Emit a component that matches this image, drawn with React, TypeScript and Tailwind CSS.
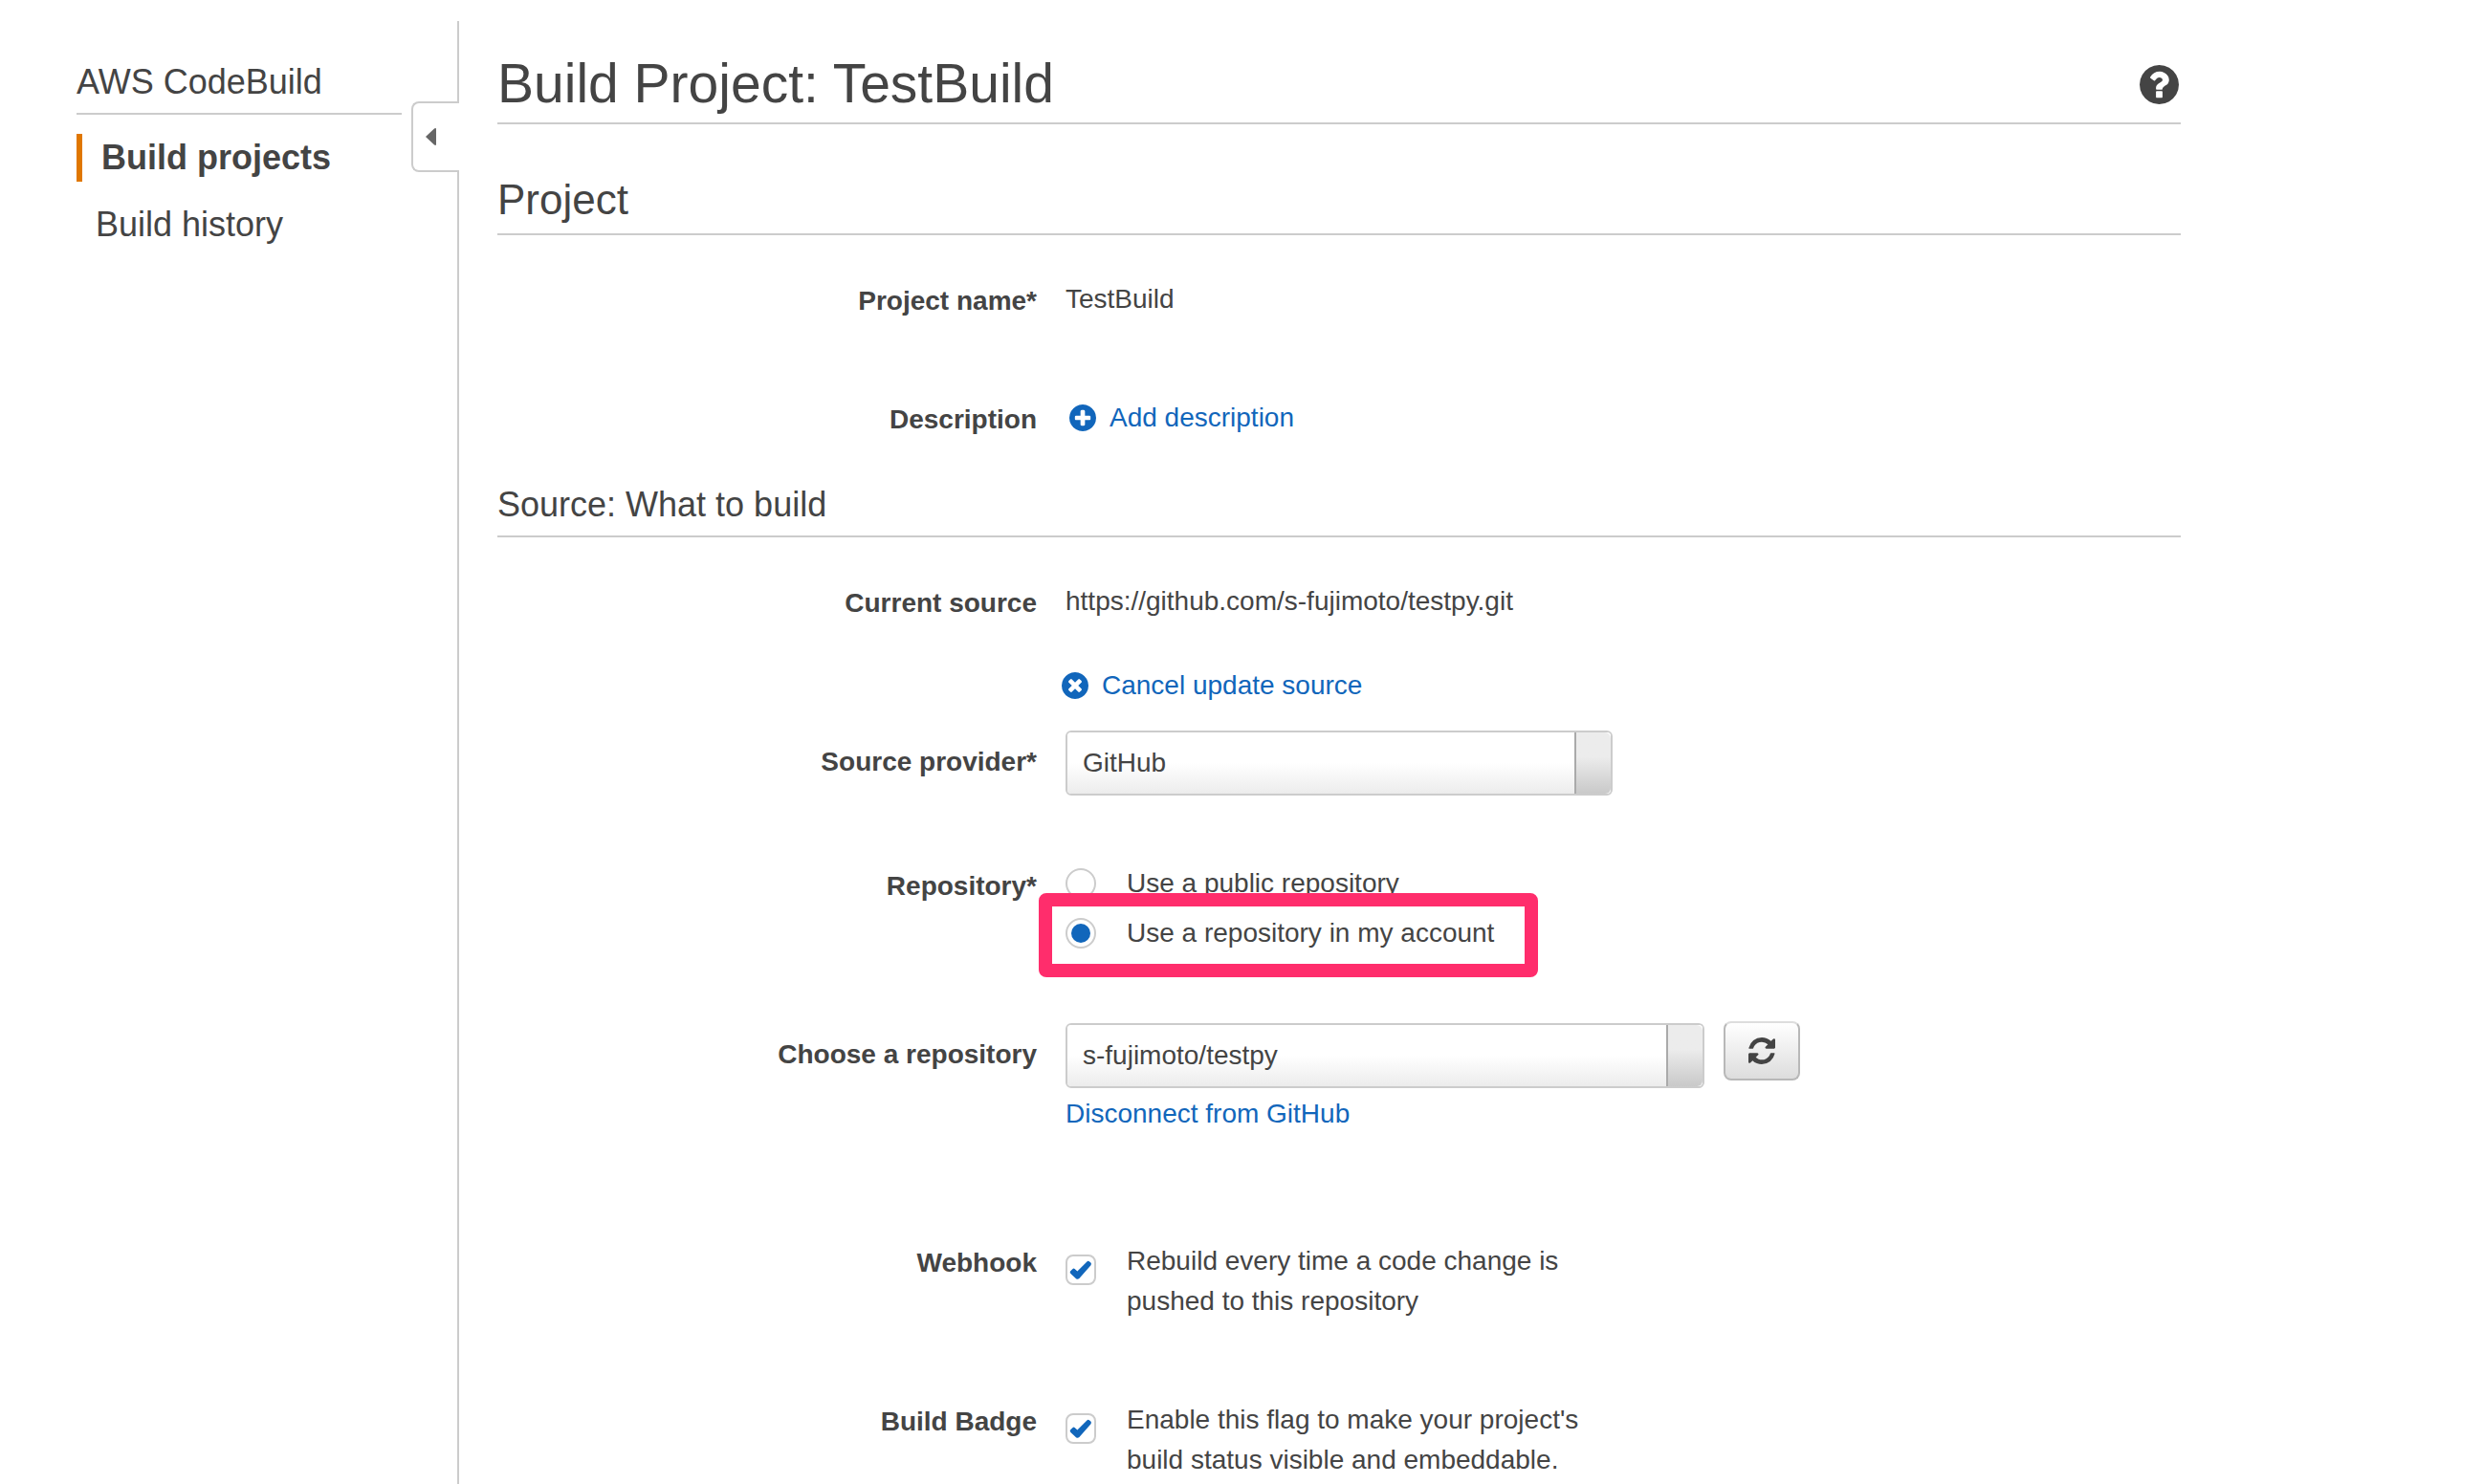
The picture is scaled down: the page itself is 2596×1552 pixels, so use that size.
import { useState } from "react"
import { clsx } from "clsx"

const circle =
  "M1664 896q0 209-103 385.5t-279.5 279.5-385.5 103-385.5-103-279.5-279.5-103-385.5 103-385.5 279.5-279.5 385.5-103 385.5 103 279.5 279.5 103 385.5z"

const glyphs = {
  help: `M1024 1376v-192q0-14-9-23t-23-9h-192q-14 0-23 9t-9 23v192q0 14 9 23t23 9h192q14 0 23-9t9-23zm256-672q0-88-55.5-163t-138.5-116-170-41q-243 0-371 213-15 24 8 42l132 100q7 6 19 6 16 0 25-12 53-68 86-92 34-24 86-24 48 0 85.5 26t37.5 59q0 38-20 61t-68 45q-63 28-115.5 86.5t-52.5 125.5v36q0 14 9 23t23 9h192q14 0 23-9t9-23q0-19 21.5-49.5t54.5-49.5q32-18 49-28.5t46-35 44.5-48 28-60.5 12.5-81z${circle}`,
  plus: `M1344 960v-128q0-26-19-45t-45-19h-256v-256q0-26-19-45t-45-19h-128q-26 0-45 19t-19 45v256h-256q-26 0-45 19t-19 45v128q0 26 19 45t45 19h256v256q0 26 19 45t45 19h128q26 0 45-19t19-45v-256h256q26 0 45-19t19-45z${circle}`,
  times: `M1277 1122q0-26-19-45l-181-181 181-181q19-19 19-45 0-27-19-46l-90-90q-19-19-46-19-26 0-45 19l-181 181-181-181q-19-19-45-19-27 0-46 19l-90 90q-19 19-19 46 0 26 19 45l181 181-181 181q-19 19-19 45 0 27 19 46l90 90q19 19 46 19 26 0 45-19l181-181 181 181q19 19 45 19 27 0 46-19l90-90q19-19 19-46z${circle}`,
  refresh:
    "M1639 1056q0 5-1 7-64 268-268 434.5t-478 166.5q-146 0-282.5-55t-243.5-157l-129 129q-19 19-45 19t-45-19-19-45v-448q0-26 19-45t45-19h448q26 0 45 19t19 45-19 45l-137 137q71 66 161 102t187 36q134 0 250-65t186-179q11-17 53-117 8-23 30-23h192q13 0 22.5 9.5t9.5 22.5zm25-800v448q0 26-19 45t-45 19h-448q-26 0-45-19t-19-45 19-45l138-138q-148-137-349-137-134 0-250 65t-186 179q-11 17-53 117-8 23-30 23h-199q-13 0-22.5-9.5t-9.5-22.5v-7q65-268 270-434.5t480-166.5q146 0 284 55.5t245 156.5l130-129q19-19 45-19t45 19 19 45z",
}

function Glyph({ name, className }: { name: keyof typeof glyphs; className: string }) {
  return (
    <svg viewBox="128 128 1536 1536" fill="currentColor" fillRule="evenodd" className={className} aria-hidden="true">
      <path d={glyphs[name]} />
    </svg>
  )
}

type RowProps = {
  label?: string
  htmlFor?: string
  className?: string
  labelClass?: string
  children: React.ReactNode
}

function Row({ label, htmlFor, className, labelClass = "pt-0.5", children }: RowProps) {
  const text = clsx("text-right font-bold", labelClass)
  return (
    <div className={clsx("grid grid-cols-[564px_1fr] gap-x-[30px]", className)}>
      {htmlFor ? <label htmlFor={htmlFor} className={text}>{label}</label> : <div className={text}>{label}</div>}
      <div>{children}</div>
    </div>
  )
}

type DropdownProps = { id: string; className: string; options: string[] }

function Dropdown({ id, className, options }: DropdownProps) {
  return (
    <div className={clsx("relative h-[68px] overflow-hidden rounded-md border-2 border-[#ccc]", className)}>
      <select
        id={id}
        className="h-full w-full appearance-none bg-linear-to-b from-white from-50% to-[#ececec] pr-12 pl-4"
      >
        {options.map((o) => <option key={o}>{o}</option>)}
      </select>
      <span className="pointer-events-none absolute inset-y-0 right-0 w-[38px] rounded-r-md border-l-2 border-[#aaa] bg-linear-to-b from-[#ececec] from-40% to-[#c9c9c9]" />
    </div>
  )
}

type RadioProps = { label: string; checked: boolean; onChange: () => void }

function RepoRadio({ label, checked, onChange }: RadioProps) {
  return (
    <label className="flex h-[52px] w-fit items-center gap-8">
      <input
        type="radio"
        name="repository"
        checked={checked}
        onChange={onChange}
        className="size-8 appearance-none rounded-full border-2 border-[#ccc] bg-white p-1 before:block before:size-5 before:rounded-full checked:before:bg-[#1166bb]"
      />
      {label}
    </label>
  )
}

function Checkbox({ id, children }: { id: string; children: React.ReactNode }) {
  return (
    <div className="flex gap-8">
      <span className="relative mt-3.5 size-8 shrink-0">
        <input
          id={id}
          type="checkbox"
          defaultChecked
          className="peer block size-8 appearance-none rounded-lg border-2 border-[#ccc] bg-white"
        />
        <svg
          viewBox="0 0 32 32"
          className="pointer-events-none absolute inset-0 hidden size-8 fill-[#1166bb] peer-checked:block"
          aria-hidden="true"
        >
          <path d="M5 17.4 7.6 14.9Q8.6 14.1 9.6 15L12.4 17.6 22.4 7.4Q23.6 6.4 24.8 7.2L26.4 8.6Q27.5 9.8 26.5 11.2L14.4 25Q12.8 26.5 11 25.2L5.4 20Q4.2 18.6 5 17.4Z" />
        </svg>
      </span>
      <label htmlFor={id} className="w-[500px]">{children}</label>
    </div>
  )
}

function SideNav() {
  return (
    <aside className="flex w-[480px] shrink-0 pl-20">
      <nav className="flex-1 pt-16 text-[36px]">
        <h2 className="border-b-2 border-[#ccc] pb-2.5 leading-[44px]">AWS CodeBuild</h2>
        <a href="#projects" className="mt-5 block border-l-6 border-[#e07700] pl-5 leading-[50px] font-bold">
          Build projects
        </a>
        <a href="#history" className="mt-5 block pl-5 leading-[50px]">Build history</a>
      </nav>
      <div className="ml-2.5 flex w-[50px] flex-col pt-[22px]">
        <div className="h-[84px] border-r-2 border-[#ccc]" />
        <button
          aria-label="Collapse navigation"
          className="flex h-[74px] items-center rounded-l-lg border-2 border-r-0 border-[#ccc] pl-[13px]"
        >
          <svg viewBox="0 0 11 18" className="h-[18px] w-[11px] fill-[#666]" aria-hidden="true">
            <path d="M0 9 9 .5Q11 -.5 11 1V17Q11 18.5 9 17.5Z" />
          </svg>
        </button>
        <div className="flex-1 border-r-2 border-[#ccc]" />
      </div>
    </aside>
  )
}

export default function App() {
  const [ownRepo, setOwnRepo] = useState(true)

  return (
    <div className="flex min-h-screen bg-white font-['Liberation_Sans',Arial,sans-serif] text-[28px] leading-[42px] text-[#444]">
      <SideNav />
      <main className="min-w-0 flex-1 pt-[55px] pr-[316px] pl-10">
        <header className="flex items-center justify-between border-b-2 border-[#ccc] pb-[9px]">
          <h1 className="text-[57px] leading-[64px]">Build Project: TestBuild</h1>
          <button aria-label="Help" className="pt-0.5 pr-0.5">
            <Glyph name="help" className="size-[41px]" />
          </button>
        </header>

        <h2 className="mt-[53px] border-b-2 border-[#ccc] pb-[9px] text-[44px] leading-[52px]">Project</h2>
        <Row label="Project name*" className="mt-[46px]">TestBuild</Row>
        <Row label="Description" className="mt-20">
          <a href="#description" className="ml-1 flex w-fit items-center gap-3.5 text-[#1166bb]">
            <Glyph name="plus" className="size-7" />
            Add description
          </a>
        </Row>

        <h3 className="mt-[46px] border-b-2 border-[#ccc] pb-2.5 text-[36px] leading-[44px]">Source: What to build</h3>
        <Row label="Current source" className="mt-[46px]">https://github.com/s-fujimoto/testpy.git</Row>
        <Row className="mt-11">
          <a href="#cancel" className="-ml-1 flex w-fit items-center gap-3.5 text-[#1166bb]">
            <Glyph name="times" className="size-7" />
            Cancel update source
          </a>
        </Row>
        <Row label="Source provider*" htmlFor="provider" className="mt-[26px]" labelClass="pt-3">
          <Dropdown id="provider" className="w-[572px]" options={["GitHub", "AWS CodeCommit", "Amazon S3"]} />
        </Row>

        <Row label="Repository*" className="mt-[66px]" labelClass="pt-2">
          <div role="radiogroup" aria-label="Repository">
            <RepoRadio label="Use a public repository" checked={!ownRepo} onChange={() => setOwnRepo(false)} />
            <div className="relative">
              <RepoRadio label="Use a repository in my account" checked={ownRepo} onChange={() => setOwnRepo(true)} />
              <div className="pointer-events-none absolute -top-4 -left-7 h-[88px] w-[522px] rounded-lg border-14 border-[#ff2d6c]" />
            </div>
          </div>
        </Row>

        <Row label="Choose a repository" htmlFor="repo" className="mt-[66px]" labelClass="pt-3.5">
          <div className="flex gap-5">
            <Dropdown id="repo" className="mt-0.5 w-[668px]" options={["s-fujimoto/testpy"]} />
            <button
              aria-label="Refresh"
              className="flex h-[62px] w-20 items-center justify-center rounded-lg border-2 border-[#b8b8b8] border-t-[#ddd] bg-linear-to-b from-white to-[#ddd]"
            >
              <Glyph name="refresh" className="size-7" />
            </button>
          </div>
          <a href="#disconnect" className="mt-1.5 block w-fit text-[#1166bb]">Disconnect from GitHub</a>
        </Row>

        <Row label="Webhook" htmlFor="webhook" className="mt-28">
          <Checkbox id="webhook">Rebuild every time a code change is pushed to this repository</Checkbox>
        </Row>
        <Row label="Build Badge" htmlFor="badge" className="mt-[82px]">
          <Checkbox id="badge">Enable this flag to make your project's build status visible and embeddable.</Checkbox>
        </Row>
      </main>
    </div>
  )
}
